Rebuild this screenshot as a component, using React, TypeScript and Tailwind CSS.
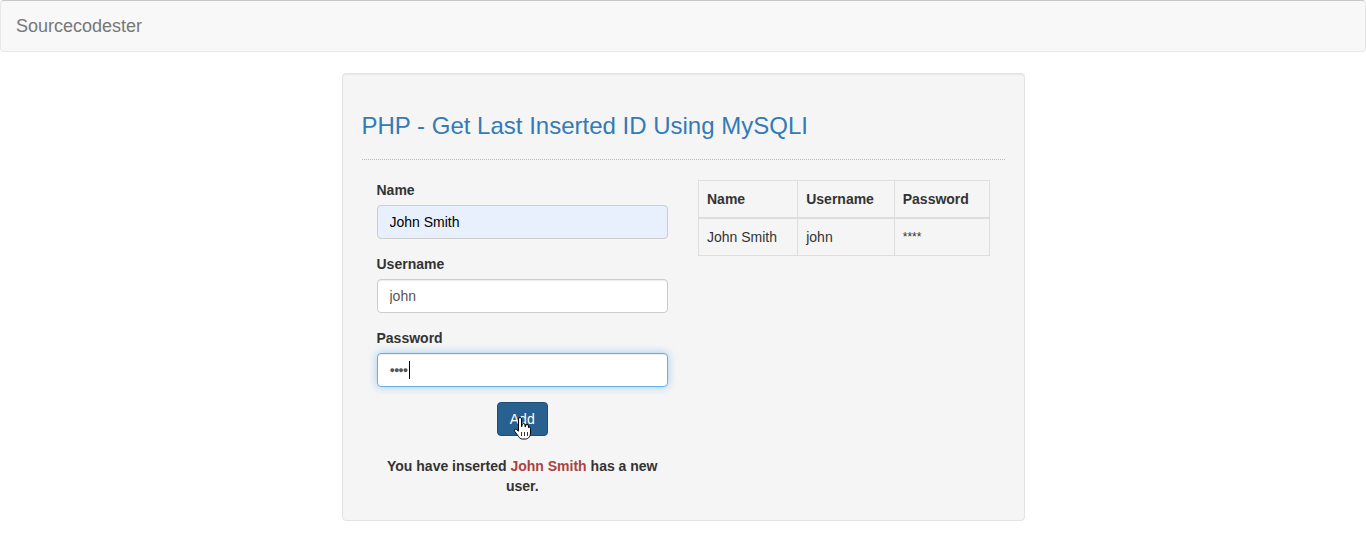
import { Fragment } from 'react';

const rows = [{ name: 'John Smith', username: 'john', password: '****' }];

function HandCursor() {
  return (
    <svg
      width="18"
      height="24"
      viewBox="0 0 18 24"
      className="absolute left-[16px] top-[15px] pointer-events-none"
    >
      <path
        d="M5.5 2a1.5 1.5 0 0 1 3 0v7.5h.5V8a1.5 1.5 0 0 1 3 0v1.8h.5V9a1.5 1.5 0 0 1 3 0v1.5h.2V10a1.5 1.5 0 0 1 1.8 1.5V16c0 3.2-2 6-5 6H9.5c-2 0-3-1-4-2.5L1.6 14.2c-.8-1.2.5-2.6 1.7-1.8l2.2 1.7Z"
        fill="#fff"
        stroke="#000"
        strokeWidth="1"
        strokeLinejoin="round"
      />
      <path d="M8.5 15v4M11.5 15v4M14.5 15v4" stroke="#000" strokeWidth="0.8" />
    </svg>
  );
}

export default function App() {
  return (
    <div className="min-h-[554px] bg-white font-['Liberation_Sans',Arial,sans-serif] text-[14px] leading-[20px] text-[#333]">
      {/* Navbar */}
      <nav className="h-[52px] border border-[#e7e7e7] border-t-[#c8c8c8] rounded-[4px] bg-[#f8f8f8] flex items-center">
        <span className="pl-[15px] text-[18px] text-[#777]">Sourcecodester</span>
      </nav>

      {/* Well */}
      <div className="mx-auto mt-[21px] w-1/2 rounded-[4px] border border-[#e3e3e3] bg-[#f5f5f5] p-[19px] shadow-[inset_0_1px_1px_rgba(0,0,0,0.05)]">
        <h3 className="mt-[20px] text-[24px] leading-[26px] text-[#337ab7]">
          PHP - Get Last Inserted ID Using MySQLI
        </h3>
        <hr className="mt-[20px] mb-[20px] border-0 border-t border-dotted border-[#bbb]" />

        <div className="flex">
          {/* Form column */}
          <div className="w-1/2 px-[15px]">
            <div className="mb-[15px]">
              <label className="block mb-[5px] font-bold">Name</label>
              <input
                readOnly
                value="John Smith"
                className="block w-full h-[34px] px-[12px] rounded-[4px] border border-[#ccc] bg-[#e8f0fe] text-black outline-none"
              />
            </div>
            <div className="mb-[15px]">
              <label className="block mb-[5px] font-bold">Username</label>
              <input
                readOnly
                value="john"
                className="block w-full h-[34px] px-[12px] rounded-[4px] border border-[#ccc] bg-white text-[#555] outline-none shadow-[inset_0_1px_1px_rgba(0,0,0,0.075)]"
              />
            </div>
            <div className="mb-[15px]">
              <label className="block mb-[5px] font-bold">Password</label>
              <div className="flex items-center h-[34px] px-[12px] rounded-[4px] border border-[#66afe9] bg-white shadow-[inset_0_1px_1px_rgba(0,0,0,0.075),0_0_8px_rgba(102,175,233,0.6)]">
                <span className="text-[9px] tracking-[-1px] text-[#555]">●●●●</span>
                <span className="ml-[2px] h-[18px] w-px bg-black" />
              </div>
            </div>
            <div className="flex justify-center">
              <div className="relative">
                <button className="h-[34px] px-[12px] rounded-[4px] border border-[#204d74] bg-[#286090] text-white">
                  Add
                </button>
                <HandCursor />
              </div>
            </div>
            <p className="mt-[20px] mb-[5px] text-center font-bold">
              You have inserted <span className="text-[#a94442]">John Smith</span> has a new user.
            </p>
          </div>

          {/* Table column */}
          <div className="w-1/2 px-[15px]">
            <table className="w-full border-collapse border border-[#ddd]">
              <thead>
                <tr>
                  {['Name', 'Username', 'Password'].map((h) => (
                    <th
                      key={h}
                      className="border border-[#ddd] border-b-2 p-[8px] text-left font-bold"
                    >
                      {h}
                    </th>
                  ))}
                </tr>
              </thead>
              <tbody>
                {rows.map((r) => (
                  <Fragment key={r.username}>
                    <tr>
                      <td className="border border-[#ddd] p-[8px]">{r.name}</td>
                      <td className="border border-[#ddd] p-[8px]">{r.username}</td>
                      <td className="border border-[#ddd] p-[8px] align-top text-[12px]">{r.password}</td>
                    </tr>
                  </Fragment>
                ))}
              </tbody>
            </table>
          </div>
        </div>
      </div>
    </div>
  );
}
